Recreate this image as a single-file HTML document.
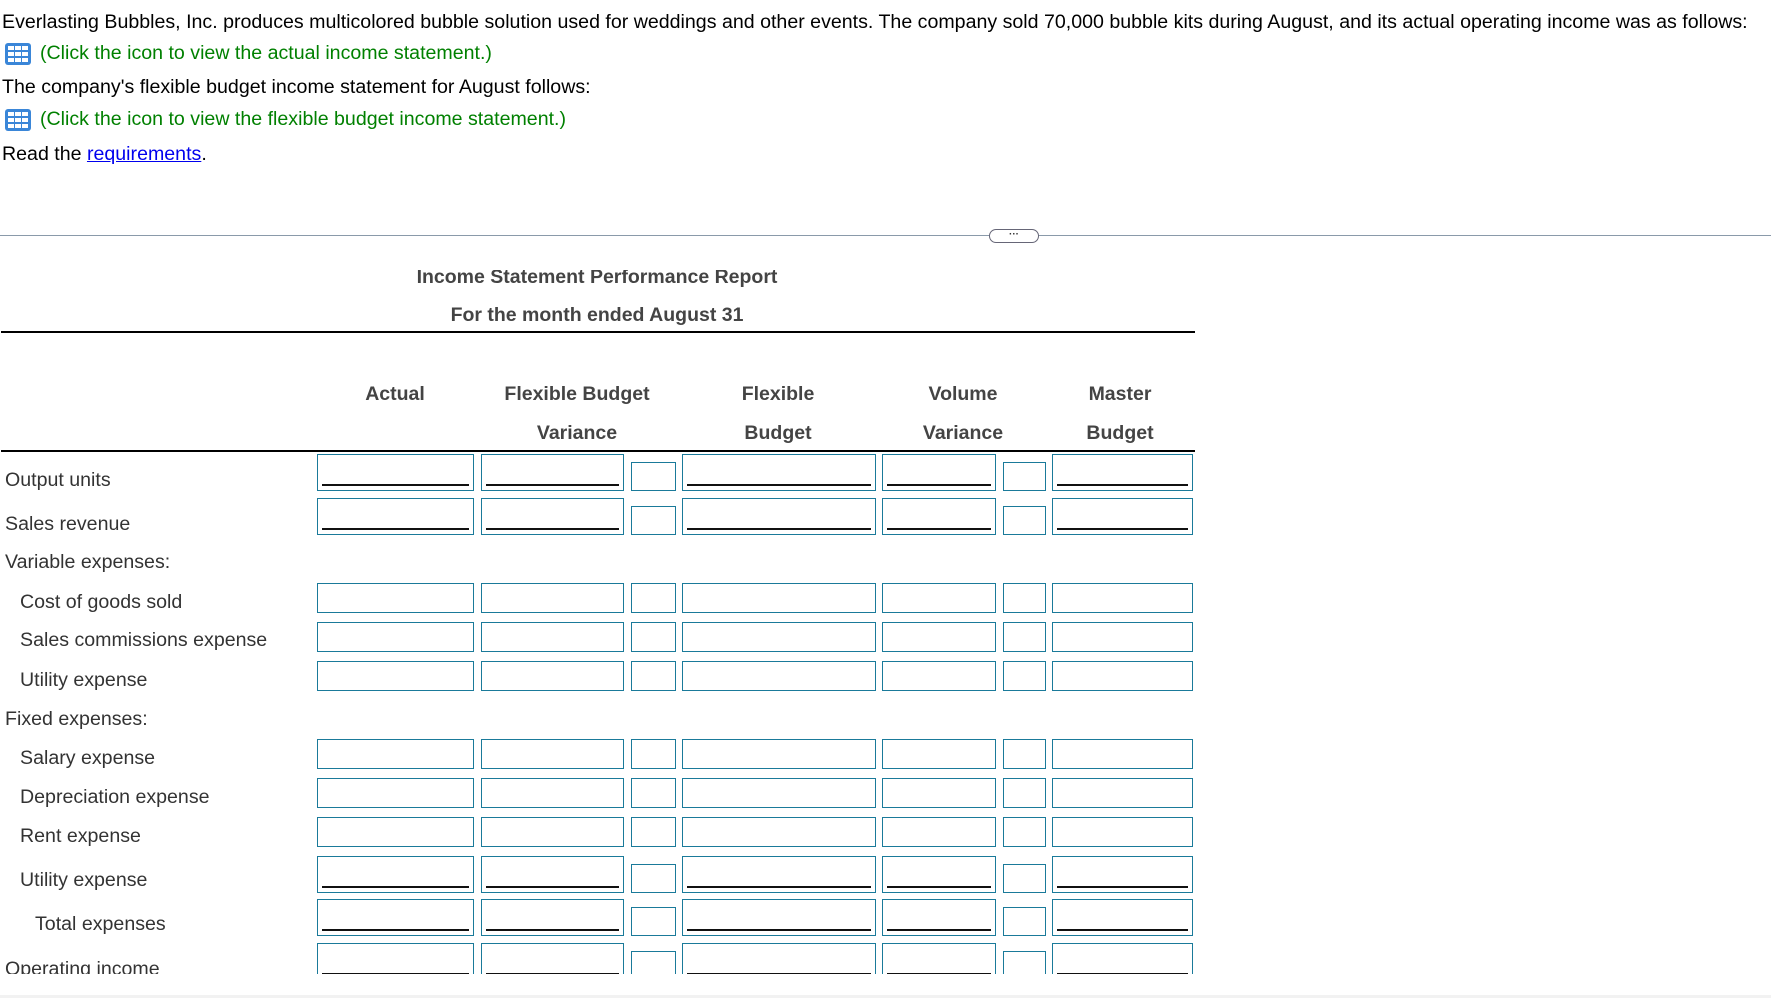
<!DOCTYPE html>
<html><head><meta charset="utf-8"><style>
body{margin:0;width:1771px;height:998px;position:relative;overflow:hidden;background:#fff;font-family:"Liberation Sans",Arial,sans-serif;}
.t{position:absolute;white-space:nowrap;font-size:19.6px;color:#000;line-height:20px}
.g{color:#008000}
.ic{position:absolute;left:5px;width:26px;height:22px;background:#3a86d8;border-radius:3px;}
.ic i{position:absolute;width:6px;height:4px;background:#fff}
.lbl{position:absolute;font-size:19.6px;color:#333;white-space:nowrap;line-height:20px}
.h{position:absolute;font-size:19.5px;font-weight:bold;color:#444;white-space:nowrap;transform:translateX(-50%);line-height:20px}
.r{position:absolute;left:0;width:1200px}
.b{position:absolute;top:0;height:28px;border:1.5px solid #1a7a9a;background:#fff;box-sizing:content-box}
.u .b{height:35px}
.u .b:after{content:"";position:absolute;left:4px;right:4px;bottom:4px;border-bottom:2px solid #111}
.u .s{top:8px;height:27px}
.u .s:after{display:none}
.c1{left:317px;width:155px}.c2{left:481px;width:141px}.s.c3{left:631px;width:43px}.c4{left:682px;width:192px}.c5{left:882px;width:112px}.s.c6{left:1003px;width:41px}.c7{left:1052px;width:139px}
</style></head><body>
<div class="t" style="left:2px;top:12px">Everlasting Bubbles, Inc. produces multicolored bubble solution used for weddings and other events. The company sold 70,000 bubble kits during August, and its actual operating income was as follows:</div>
<div class="ic" style="top:43px"><i style="left:3px;top:3px"></i><i style="left:10px;top:3px"></i><i style="left:17px;top:3px"></i><i style="left:3px;top:9px"></i><i style="left:10px;top:9px"></i><i style="left:17px;top:9px"></i><i style="left:3px;top:15px"></i><i style="left:10px;top:15px"></i><i style="left:17px;top:15px"></i></div>
<div class="t g" style="left:40px;top:43px">(Click the icon to view the actual income statement.)</div>
<div class="t" style="left:2px;top:77px">The company's flexible budget income statement for August follows:</div>
<div class="ic" style="top:109px"><i style="left:3px;top:3px"></i><i style="left:10px;top:3px"></i><i style="left:17px;top:3px"></i><i style="left:3px;top:9px"></i><i style="left:10px;top:9px"></i><i style="left:17px;top:9px"></i><i style="left:3px;top:15px"></i><i style="left:10px;top:15px"></i><i style="left:17px;top:15px"></i></div>
<div class="t g" style="left:40px;top:109px">(Click the icon to view the flexible budget income statement.)</div>
<div class="t" style="left:2px;top:144px">Read the <span style="color:#00e;text-decoration:underline">requirements</span>.</div>
<div style="position:absolute;left:0;top:235px;width:1771px;height:1px;background:#8a9aaa"></div>
<div style="position:absolute;left:989px;top:229px;width:48px;height:12px;border:1px solid #667;border-radius:7px;background:#fff;font-size:10px;line-height:10px;text-align:center;color:#333;font-weight:bold">&middot;&middot;&middot;</div>
<div style="position:absolute;left:0;top:270px;width:1195px;height:704px;overflow:hidden">
<div class="h" style="left:597px;top:-3px">Income Statement Performance Report</div>
</div>
<div style="position:absolute;left:0;top:0;width:1195px;height:974px;overflow:hidden">
<div class="h" style="left:597px;top:305px">For the month ended August 31</div>
<div style="position:absolute;left:1px;top:331px;width:1194px;height:1.5px;background:#000"></div>
<div class="h" style="left:395px;top:384px">Actual</div>
<div class="h" style="left:577px;top:384px">Flexible Budget</div>
<div class="h" style="left:577px;top:423px">Variance</div>
<div class="h" style="left:778px;top:384px">Flexible</div>
<div class="h" style="left:778px;top:423px">Budget</div>
<div class="h" style="left:963px;top:384px">Volume</div>
<div class="h" style="left:963px;top:423px">Variance</div>
<div class="h" style="left:1120px;top:384px">Master</div>
<div class="h" style="left:1120px;top:423px">Budget</div>
<div style="position:absolute;left:1px;top:450px;width:1194px;height:1.5px;background:#000"></div>

<div class="lbl" style="left:5px;top:470px">Output units</div>
<div class="lbl" style="left:5px;top:514px">Sales revenue</div>
<div class="lbl" style="left:5px;top:552px">Variable expenses:</div>
<div class="lbl" style="left:20px;top:592px">Cost of goods sold</div>
<div class="lbl" style="left:20px;top:630px">Sales commissions expense</div>
<div class="lbl" style="left:20px;top:670px">Utility expense</div>
<div class="lbl" style="left:5px;top:709px">Fixed expenses:</div>
<div class="lbl" style="left:20px;top:748px">Salary expense</div>
<div class="lbl" style="left:20px;top:787px">Depreciation expense</div>
<div class="lbl" style="left:20px;top:826px">Rent expense</div>
<div class="lbl" style="left:20px;top:870px">Utility expense</div>
<div class="lbl" style="left:35px;top:914px">Total expenses</div>
<div class="lbl" style="left:5px;top:959px">Operating income</div>

<div class="r u" style="top:454px"><div class="b c1"></div><div class="b c2"></div><div class="b s c3"></div><div class="b c4"></div><div class="b c5"></div><div class="b s c6"></div><div class="b c7"></div></div>
<div class="r u" style="top:498px"><div class="b c1"></div><div class="b c2"></div><div class="b s c3"></div><div class="b c4"></div><div class="b c5"></div><div class="b s c6"></div><div class="b c7"></div></div>
<div class="r" style="top:583px"><div class="b c1"></div><div class="b c2"></div><div class="b s c3"></div><div class="b c4"></div><div class="b c5"></div><div class="b s c6"></div><div class="b c7"></div></div>
<div class="r" style="top:622px"><div class="b c1"></div><div class="b c2"></div><div class="b s c3"></div><div class="b c4"></div><div class="b c5"></div><div class="b s c6"></div><div class="b c7"></div></div>
<div class="r" style="top:661px"><div class="b c1"></div><div class="b c2"></div><div class="b s c3"></div><div class="b c4"></div><div class="b c5"></div><div class="b s c6"></div><div class="b c7"></div></div>
<div class="r" style="top:739px"><div class="b c1"></div><div class="b c2"></div><div class="b s c3"></div><div class="b c4"></div><div class="b c5"></div><div class="b s c6"></div><div class="b c7"></div></div>
<div class="r" style="top:778px"><div class="b c1"></div><div class="b c2"></div><div class="b s c3"></div><div class="b c4"></div><div class="b c5"></div><div class="b s c6"></div><div class="b c7"></div></div>
<div class="r" style="top:817px"><div class="b c1"></div><div class="b c2"></div><div class="b s c3"></div><div class="b c4"></div><div class="b c5"></div><div class="b s c6"></div><div class="b c7"></div></div>
<div class="r u" style="top:856px"><div class="b c1"></div><div class="b c2"></div><div class="b s c3"></div><div class="b c4"></div><div class="b c5"></div><div class="b s c6"></div><div class="b c7"></div></div>
<div class="r u" style="top:899px"><div class="b c1"></div><div class="b c2"></div><div class="b s c3"></div><div class="b c4"></div><div class="b c5"></div><div class="b s c6"></div><div class="b c7"></div></div>
<div class="r u" style="top:943px"><div class="b c1"></div><div class="b c2"></div><div class="b s c3"></div><div class="b c4"></div><div class="b c5"></div><div class="b s c6"></div><div class="b c7"></div></div>
</div>
<div style="position:absolute;left:0;top:995px;width:1771px;height:3px;background:#f2f2f2"></div>
</body></html>
